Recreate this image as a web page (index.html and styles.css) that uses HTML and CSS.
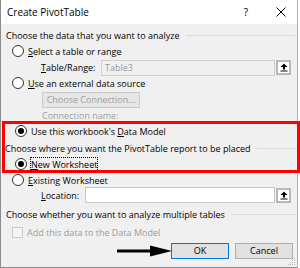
FILE: index.html
```html
<!DOCTYPE html>
<html lang="en">
<head>
    <meta charset="UTF-8">
    <title>Create PivotTable</title>
    <link rel="stylesheet" href="styles.css">
</head>
<body>
    <div class="dialog">
        <div class="title-bar">
            <span class="title">Create PivotTable</span>
            <span class="help">?</span>
            <span class="close">
                <svg width="10" height="10" viewBox="0 0 10 10"><path d="M0.5 0.5 L9.5 9.5 M9.5 0.5 L0.5 9.5" stroke="#000" stroke-width="1"/></svg>
            </span>
        </div>

        <div class="content">
            <div class="group-label row-label1"><span>Choose the data that you want to analyze</span><div class="rule"></div></div>

            <div class="option row-radio1"><span class="radio"></span><span><u>S</u>elect a table or range</span></div>

            <div class="field row-table">
                <label class="field-label label-table"><u>T</u>able/Range:</label>
                <div class="input disabled">Table3</div>
                <div class="ref-button"><svg width="8" height="9" viewBox="0 0 8 9"><path d="M4 0.5 L7.5 4 L5 4 L5 6.5 L3 6.5 L3 4 L0.5 4 Z" fill="#000"/><rect x="0.5" y="7.5" width="7" height="1" fill="#000"/></svg></div>
            </div>

            <div class="option row-radio2"><span class="radio"></span><span><u>U</u>se an external data source</span></div>

            <div class="indent row-conn-button"><div class="push-button disabled">Choose Connection...</div></div>
            <div class="indent muted row-conn-name">Connection name:</div>

            <div class="highlight">
                <div class="option row-radio3"><span class="radio checked"></span><span>Use this workbook's <u>D</u>ata Model</span></div>
                <div class="group-label row-label2"><span>Choose where you want the PivotTable report to be placed</span><div class="rule"></div></div>
                <div class="option row-radio4"><span class="radio checked"></span><span class="focus"><u>N</u>ew Worksheet</span></div>
            </div>

            <div class="option row-radio5"><span class="radio"></span><span><u>E</u>xisting Worksheet</span></div>

            <div class="field row-location">
                <label class="field-label label-location"><u>L</u>ocation:</label>
                <div class="input"></div>
                <div class="ref-button"><svg width="8" height="9" viewBox="0 0 8 9"><path d="M4 0.5 L7.5 4 L5 4 L5 6.5 L3 6.5 L3 4 L0.5 4 Z" fill="#000"/><rect x="0.5" y="7.5" width="7" height="1" fill="#000"/></svg></div>
            </div>

            <div class="group-label row-label3"><span>Choose whether you want to analyze multiple tables</span><div class="rule"></div></div>

            <div class="option muted row-check"><span class="checkbox"></span><span>Add this data to the Data Model</span></div>

            <div class="buttons">
                <div class="push-button default">OK</div>
                <div class="push-button">Cancel</div>
            </div>
        </div>

        <!-- annotation arrow pointing at OK -->
        <svg class="pointer" width="56" height="12" viewBox="0 0 56 12"><rect x="0" y="4.5" width="36" height="3" fill="#000"/><path d="M33 0.5 L55 6 L33 11.5 Z" fill="#000"/></svg>

        <svg class="grip" width="8" height="8" viewBox="0 0 8 8"><g fill="#b8b8b8"><rect x="6" y="0" width="1" height="1"/><rect x="4" y="2" width="1" height="1"/><rect x="6" y="2" width="1" height="1"/><rect x="2" y="4" width="1" height="1"/><rect x="4" y="4" width="1" height="1"/><rect x="6" y="4" width="1" height="1"/><rect x="0" y="6" width="1" height="1"/><rect x="2" y="6" width="1" height="1"/><rect x="4" y="6" width="1" height="1"/><rect x="6" y="6" width="1" height="1"/></g></svg>
    </div>
</body>
</html>
```

FILE: styles.css
```css
body {
    margin: 0;
    padding: 0;
    background-color: #ffffff;
    font-family: "Open Sans", "Noto Sans", sans-serif;
    font-size: 9px;
    color: #000;
}
.dialog {
    position: relative;
    width: 296px;
    height: 267px;
    background-color: #f0f0f0;
    border: 1px solid #8c8c8c;
    border-top: none;
    border-right-color: #b4b4b4;
}
.title-bar {
    height: 24px;
    background-color: #ffffff;
    display: flex;
    align-items: center;
    font-size: 10px;
}
.title {
    flex: 1;
    padding-left: 6px;
}
.help {
    width: 20px;
    text-align: center;
    margin-right: 14px;
}
.close {
    width: 22px;
    display: flex;
    justify-content: center;
    margin-right: 5px;
}
.content {
    padding: 3px 2px 0 5px;
}
.group-label {
    display: flex;
    align-items: center;
}
.group-label .rule {
    flex: 1;
    height: 1px;
    background-color: #dcdcdc;
    margin-left: 6px;
}
.option {
    display: flex;
    align-items: center;
    padding-left: 6px;
}
.radio {
    width: 10px;
    height: 10px;
    border: 1px solid #333;
    border-radius: 50%;
    background-color: #fff;
    margin-right: 4px;
    display: flex;
    align-items: center;
    justify-content: center;
}
.radio.checked::after {
    content: "";
    width: 6px;
    height: 6px;
    border-radius: 50%;
    background-color: #000;
}
.checkbox {
    width: 9px;
    height: 9px;
    border: 1px solid #cccccc;
    background-color: #f4f4f4;
    margin-right: 4px;
}
.focus {
    outline: 1px dotted #000;
    outline-offset: 0;
}
.field {
    display: flex;
    align-items: center;
    padding-left: 35px;
}
.field-label {
    display: block;
}
.label-table {
    width: 60px;
}
.label-location {
    width: 44px;
}
.input {
    flex: 1;
    height: 14px;
    border: 1px solid #c8c8c8;
    background-color: #ffffff;
    line-height: 14px;
    padding-left: 3px;
}
.input.disabled {
    background-color: #f0f0f0;
    border-color: #d0d0d0;
    color: #9a9a9a;
}
.ref-button {
    width: 11px;
    height: 11px;
    border: 2px solid #b8b8b8;
    background-color: #fff;
    margin-left: 1px;
    margin-right: 4px;
    display: flex;
    align-items: center;
    justify-content: center;
}
.indent {
    padding-left: 36px;
}
.muted {
    color: #9d9d9d;
}
.push-button {
    height: 14px;
    line-height: 14px;
    text-align: center;
    background-color: #e1e1e1;
    border: 1px solid #adadad;
}
.push-button.disabled {
    width: 96px;
    background-color: #e6e6e6;
    border-color: #cccccc;
    color: #a0a0a0;
}
.push-button.default {
    border-color: #0078d7;
}
.highlight {
    margin: 0 0 0 -4px;
    width: 288px;
    border: 3px solid #ff0000;
    padding-left: 4px;
    box-sizing: content-box;
}
.highlight .group-label {
    margin-left: -4px;
    padding-left: 0;
}
.row-label1 { height: 16px; }
.row-radio1 { height: 16px; }
.row-table { height: 17px; }
.row-radio2 { height: 14px; }
.row-conn-button { height: 20px; display: flex; align-items: center; }
.row-conn-name { height: 11px; line-height: 11px; }
.row-radio3 { height: 14px; }
.row-label2 { height: 20px; }
.row-radio4 { height: 12px; }
.row-radio5 { height: 14px; }
.row-location { height: 16px; }
.row-label3 { height: 23px; }
.row-check { height: 12px; }
.buttons {
    display: flex;
    justify-content: flex-end;
    gap: 6px;
    padding-top: 5px;
    padding-right: 2px;
}
.buttons .push-button {
    width: 56px;
}
.pointer {
    position: absolute;
    left: 116px;
    top: 245px;
}
.grip {
    position: absolute;
    right: 1px;
    bottom: 1px;
}
```
